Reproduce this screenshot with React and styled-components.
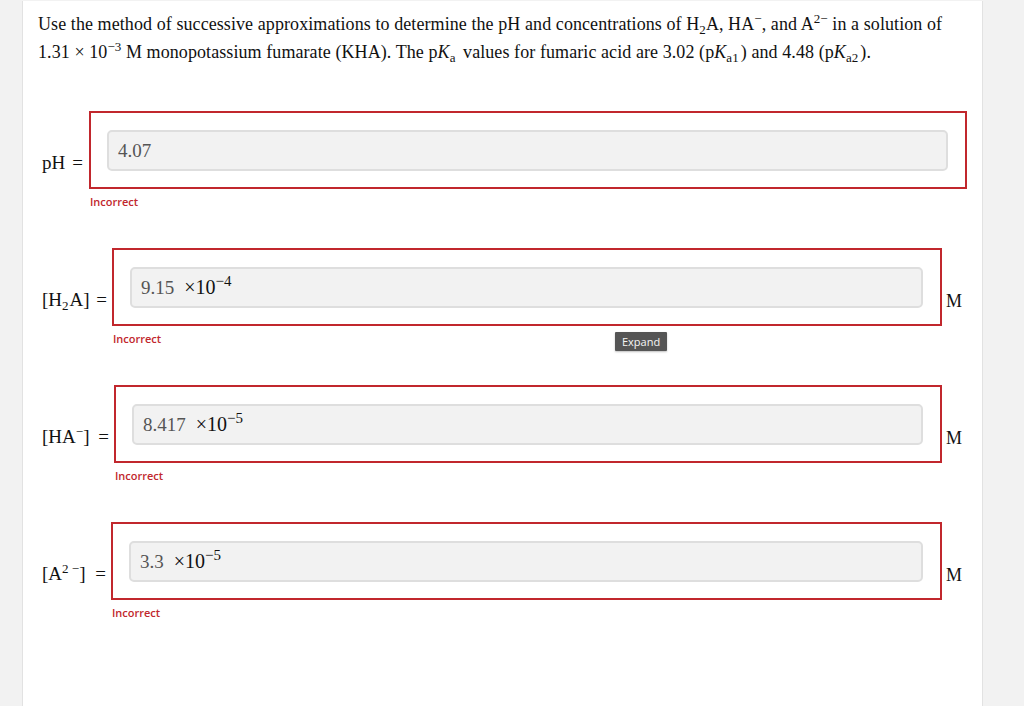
import React from "react";
import styled, { createGlobalStyle } from "styled-components";

const Global = createGlobalStyle`
  html, body { margin: 0; padding: 0; background: #f2f2f2; }
  body { width: 1024px; height: 706px; overflow: hidden; }
`;

const Panel = styled.div`
  position: relative;
  margin: 1px 0 0 22px;
  width: 961px;
  height: 705px;
  box-sizing: border-box;
  background: #fff;
  border-left: 1px solid #e2e2e2;
  border-right: 1px solid #e2e2e2;
  padding: 9px 15px 0 15px;
  font-family: "Liberation Serif", "Times New Roman", serif;
  color: #000;
`;

const Intro = styled.p`
  margin: 0;
  font-size: 18px;
  line-height: 28px;
  letter-spacing: 0.08px;
  color: #111;
  white-space: nowrap;
`;

const Sub = styled.sub`
  font-size: 13px;
  vertical-align: -4px;
  line-height: 0;
  margin-right: ${(p) => p.$gap || 0}px;
`;

const Sup = styled.sup`
  font-size: 13px;
  vertical-align: 7px;
  line-height: 0;
  margin-right: ${(p) => p.$gap || 0}px;
`;

const Rows = styled.div`
  display: flex;
  flex-direction: column;
  gap: 39px;
  margin-top: 45px;
  padding-left: 4px;
`;

const Row = styled.div`
  display: flex;
  align-items: flex-start;
`;

const Label = styled.div`
  display: flex;
  justify-content: space-between;
  box-sizing: border-box;
  width: ${(p) => p.$width}px;
  padding-right: ${(p) => p.$pad || 5}px;
  font-size: 19px;
  line-height: 20px;
  margin-top: 42px;
  white-space: nowrap;
  color: #111;
`;

const Field = styled.div`
  flex: 1;
  display: flex;
  flex-direction: column;
  position: relative;
`;

const Box = styled.div`
  border: 2px solid #c1272d;
  padding: 17px 17px 16px 16px;
`;

const Input = styled.div`
  height: 41px;
  box-sizing: border-box;
  background: #f2f2f2;
  border: 2px solid #dedede;
  border-radius: 5px;
  padding: 0 9px;
  display: flex;
  align-items: center;
  font-size: 19px;
  color: #555;
`;

const Value = styled.span`
  color: #555;
`;

const Exp = styled.span`
  color: #111;
  margin-left: 10px;
  font-size: 20px;
`;

const ExpSup = styled.sup`
  font-size: 15px;
  vertical-align: 8px;
  line-height: 0;
`;

const Feedback = styled.div`
  font-family: "Open Sans", "Liberation Sans", sans-serif;
  font-weight: 600;
  font-size: 11px;
  line-height: 14px;
  color: #c1272d;
  margin-top: 6px;
  padding-left: 1px;
`;

const Unit = styled.div`
  width: 25px;
  padding-left: 4px;
  box-sizing: border-box;
  margin-top: 43px;
  font-size: 18px;
  line-height: 20px;
  color: #111;
`;

const Tooltip = styled.div`
  position: absolute;
  left: 503px;
  top: 84px;
  background: #555;
  color: #f5f5f5;
  font-family: "Open Sans", "Liberation Sans", sans-serif;
  font-size: 11px;
  line-height: 14px;
  padding: 3px 7px 2px;
  border-radius: 1px;
  box-shadow: 0 1px 2px rgba(0, 0, 0, 0.25);
`;

const AnswerRow = ({ name, width, pad, value, exp, unit, tooltip }) => (
  <Row>
    <Label $width={width} $pad={pad}>
      <span>{name}</span>
      <span>=</span>
    </Label>
    <Field>
      <Box>
        <Input>
          <Value>{value}</Value>
          {exp && (
            <Exp>
              ×10<ExpSup>−{exp}</ExpSup>
            </Exp>
          )}
        </Input>
      </Box>
      <Feedback>Incorrect</Feedback>
      {tooltip && <Tooltip>{tooltip}</Tooltip>}
    </Field>
    {unit && <Unit>{unit}</Unit>}
  </Row>
);

export default function App() {
  return (
    <>
      <Global />
      <Panel>
        <Intro>
          Use the method of successive approximations to determine the pH and concentrations of H<Sub>2</Sub>A, HA<Sup>−</Sup>, and A<Sup>2−</Sup> in a solution of
          <br />
          1.31 × 10<Sup>−3</Sup> M monopotassium fumarate (KHA). The p<i>K</i><Sub $gap={3}>a</Sub> values for fumaric acid are 3.02 (p<i>K</i><Sub $gap={2}>a1</Sub>) and 4.48 (p<i>K</i><Sub $gap={2}>a2</Sub>).
        </Intro>
        <Rows>
          <AnswerRow name="pH" width={47} pad={6} value="4.07" />
          <AnswerRow
            name={<>[H<Sub $gap={1}>2</Sub>A]</>}
            width={70}
            value="9.15"
            exp="4"
            unit="M"
            tooltip="Expand"
          />
          <AnswerRow name={<>[HA<Sup>−</Sup>]</>} width={72} value="8.417" exp="5" unit="M" />
          <AnswerRow name={<>[A<Sup>2 −</Sup>]</>} width={69} value="3.3" exp="5" unit="M" />
        </Rows>
      </Panel>
    </>
  );
}
